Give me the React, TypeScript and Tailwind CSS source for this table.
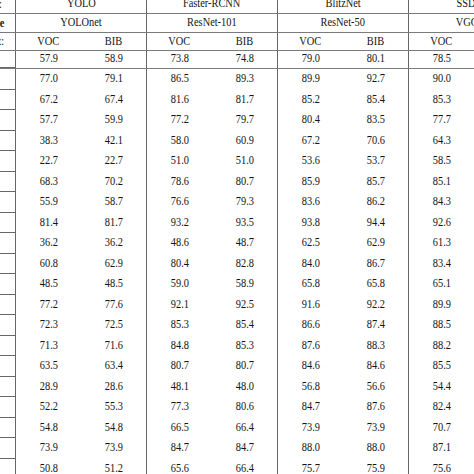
const groups = [
  { name: "YOLO", backbone: "YOLOnet" },
  { name: "Faster-RCNN", backbone: "ResNet-101" },
  { name: "BlitzNet", backbone: "ResNet-50" },
  { name: "SSD300", backbone: "VGG-16" },
]

// VOC / BIB pairs per detector, SSD BIB is out of frame
const rows: string[][] = [
  ["57.9", "58.9", "73.8", "74.8", "79.0", "80.1", "78.5", "79.6"],
  ["77.0", "79.1", "86.5", "89.3", "89.9", "92.7", "90.0", "91.2"],
  ["67.2", "67.4", "81.6", "81.7", "85.2", "85.4", "85.3", "85.9"],
  ["57.7", "59.9", "77.2", "79.7", "80.4", "83.5", "77.7", "80.1"],
  ["38.3", "42.1", "58.0", "60.9", "67.2", "70.6", "64.3", "66.0"],
  ["22.7", "22.7", "51.0", "51.0", "53.6", "53.7", "58.5", "58.5"],
  ["68.3", "70.2", "78.6", "80.7", "85.9", "85.7", "85.1", "86.2"],
  ["55.9", "58.7", "76.6", "79.3", "83.6", "86.2", "84.3", "86.0"],
  ["81.4", "81.7", "93.2", "93.5", "93.8", "94.4", "92.6", "93.0"],
  ["36.2", "36.2", "48.6", "48.7", "62.5", "62.9", "61.3", "61.5"],
  ["60.8", "62.9", "80.4", "82.8", "84.0", "86.7", "83.4", "85.1"],
  ["48.5", "48.5", "59.0", "58.9", "65.8", "65.8", "65.1", "65.1"],
  ["77.2", "77.6", "92.1", "92.5", "91.6", "92.2", "89.9", "90.4"],
  ["72.3", "72.5", "85.3", "85.4", "86.6", "87.4", "88.5", "88.9"],
  ["71.3", "71.6", "84.8", "85.3", "87.6", "88.3", "88.2", "88.6"],
  ["63.5", "63.4", "80.7", "80.7", "84.6", "84.6", "85.5", "85.5"],
  ["28.9", "28.6", "48.1", "48.0", "56.8", "56.6", "54.4", "54.4"],
  ["52.2", "55.3", "77.3", "80.6", "84.7", "87.6", "82.4", "84.9"],
  ["54.8", "54.8", "66.5", "66.4", "73.9", "73.9", "70.7", "70.7"],
  ["73.9", "73.9", "84.7", "84.7", "88.0", "88.0", "87.1", "87.1"],
  ["50.8", "51.2", "65.6", "66.4", "75.7", "75.9", "75.6", "76.0"],
]

function T({ children, bold }: { children: React.ReactNode; bold?: boolean }) {
  return (
    <span className={`inline-block whitespace-nowrap scale-x-[0.83] ${bold ? "font-bold" : ""}`}>
      {children}
    </span>
  )
}

function LeftCell({ label, pr, bold }: { label?: string; pr?: string; bold?: boolean }) {
  return (
    <div className={`flex w-[16px] shrink-0 items-center justify-end overflow-hidden border-r border-[#666] ${pr ?? ""}`}>
      {label && <T bold={bold}>{label}</T>}
    </div>
  )
}

export default function App() {
  return (
    <div
      className="h-[474px] w-[474px] overflow-hidden bg-white text-[12.5px] leading-none text-[#141414]"
      style={{ fontFamily: '"Liberation Serif", "DejaVu Serif", serif' }}
    >
      <div className="mt-[-5px] w-max">
        {/* Header: detector */}
        <div className="flex h-[19px] border-b border-[#7a7a7a]">
          <LeftCell label="Method:" pr="pr-[10px]" />
          {groups.map((g) => (
            <div key={g.name} className="flex w-[131px] shrink-0 items-center justify-center border-r border-[#666] pb-[1px]">
              <T>{g.name}</T>
            </div>
          ))}
        </div>

        {/* Header: backbone */}
        <div className="flex h-[19px] border-b border-[#7a7a7a]">
          <LeftCell label="Backbone" pr="pr-[6px]" bold />
          {groups.map((g) => (
            <div key={g.backbone} className="flex w-[131px] shrink-0 items-center justify-center border-r border-[#666] pb-[1px]">
              <T>{g.backbone}</T>
            </div>
          ))}
        </div>

        {/* Header: dataset */}
        <div className="flex h-[18px] border-b border-[#7a7a7a]">
          <LeftCell label="Test:" pr="pr-[9px]" />
          {groups.map((g) => (
            <div key={g.name} className="flex w-[131px] shrink-0 border-r border-[#666]">
              <div className="flex w-[65px] items-center justify-center pb-[1px]">
                <T>VOC</T>
              </div>
              <div className="flex w-[65px] items-center justify-center pb-[1px]">
                <T>BIB</T>
              </div>
            </div>
          ))}
        </div>

        {/* Data */}
        {rows.map((r, i) => (
          <div
            key={i}
            className={`flex ${i === 0 ? "h-[18px] border-b border-[#7a7a7a]" : "h-[20.5px]"}`}
          >
            <div className="w-[16px] shrink-0 border-r border-b border-[#666]" />
            {groups.map((g, gi) => (
              <div key={g.name} className="flex w-[131px] shrink-0 border-r border-[#666]">
                <div className="flex w-[65px] items-center justify-center pb-[2px]">
                  <T>{r[gi * 2]}</T>
                </div>
                <div className="flex w-[65px] items-center justify-center pb-[2px]">
                  <T>{r[gi * 2 + 1]}</T>
                </div>
              </div>
            ))}
          </div>
        ))}
      </div>
    </div>
  )
}
